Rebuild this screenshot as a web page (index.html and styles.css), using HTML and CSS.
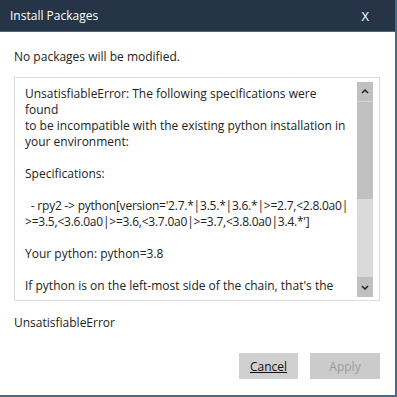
FILE: index.html
```html
<html lang="en">
<head>
    <meta charset="UTF-8">
    <title>Install Packages</title>
    <link rel="stylesheet" href="styles.css">
</head>
<body>
    <div class="dialog">
        <div class="title-bar">
            <span class="title">Install Packages</span>
            <span class="close">X</span>
        </div>
        <div class="dialog-body">
            <p class="summary">No packages will be modified.</p>
            <div class="log-box">
                <div class="log-text">UnsatisfiableError: The following specifications were
found
to be incompatible with the existing python installation in
your environment:

Specifications:

<span class="tight">  - rpy2 -&gt; python[version='2.7.*|3.5.*|3.6.*|&gt;=2.7,&lt;2.8.0a0|
&gt;=3.5,&lt;3.6.0a0|&gt;=3.6,&lt;3.7.0a0|&gt;=3.7,&lt;3.8.0a0|3.4.*']</span>

Your python: python=3.8

If python is on the left-most side of the chain, that's the</div>
                <div class="scrollbar">
                    <div class="scroll-btn up"><svg width="8" height="5" viewBox="0 0 8 5"><path d="M1 4 L4 1 L7 4" fill="none" stroke="#222" stroke-width="1.5"/></svg></div>
                    <div class="scroll-thumb"></div>
                    <div class="scroll-track"></div>
                    <div class="scroll-btn down"><svg width="8" height="5" viewBox="0 0 8 5"><path d="M1 1 L4 4 L7 1" fill="none" stroke="#222" stroke-width="1.5"/></svg></div>
                </div>
            </div>
            <p class="error-name">UnsatisfiableError</p>
            <div class="actions">
                <button class="btn cancel">Cancel</button>
                <button class="btn apply" disabled>Apply</button>
            </div>
        </div>
    </div>
</body>
</html>
```

FILE: styles.css
```css
/* dialog frame */
body {
    margin: 0;
    background: #fff;
    font-family: "Open Sans", "Noto Sans", sans-serif;
    color: #222;
}

.dialog {
    width: 395px;
    height: 395px;
    border-right: 2px solid #4b6b80;
    border-bottom: 2px solid #4b6b80;
    display: flex;
    flex-direction: column;
    background: #fff;
}

.title-bar {
    height: 31px;
    background: #253547;
    border-bottom: 1px solid #50667a;
    display: flex;
    align-items: center;
    justify-content: space-between;
    padding: 0 26px 0 10px;
    color: #fff;
}

.title {
    font-size: 12px;
}

.close {
    font-size: 13px;
}

.dialog-body {
    flex: 1;
    padding: 0 15px 0 14px;
    display: flex;
    flex-direction: column;
}

.summary {
    margin: 17px 0 12px;
    font-size: 12px;
    line-height: 16px;
}

/* log box with fake scrollbar */
.log-box {
    box-sizing: border-box;
    height: 224px;
    border: 1px solid #dcdcdc;
    display: flex;
    padding: 4px 6px 3px 10px;
    overflow: hidden;
}

.log-text {
    flex: 1;
    white-space: pre;
    overflow: hidden;
    font-size: 12px;
    line-height: 16px;
    padding-top: 4px;
}

.tight {
    letter-spacing: -0.22px;
}

.scrollbar {
    width: 16px;
    display: flex;
    flex-direction: column;
}

.scroll-btn {
    height: 20px;
    background: #c0c0c0;
    display: flex;
    align-items: center;
    justify-content: center;
}

.scroll-btn.up {
    border-bottom: 1px solid #d6d6d6;
    height: 19px;
}

.scroll-thumb {
    height: 97px;
    background: #c0c0c0;
}

.scroll-track {
    flex: 1;
    background: #dadada;
}

.error-name {
    margin: 14px 0 0;
    font-size: 12px;
    line-height: 16px;
}

.actions {
    margin-top: auto;
    margin-bottom: 16px;
    display: flex;
    justify-content: flex-end;
    gap: 12px;
}

.btn {
    height: 26px;
    border: none;
    font-family: inherit;
    font-size: 12px;
    padding: 0;
}

.cancel {
    width: 59px;
    background: #d0d0d0;
    color: #111;
    text-decoration: underline;
}

.apply {
    width: 70px;
    background: #cbcbcb;
    color: #9c9c9c;
}
```
